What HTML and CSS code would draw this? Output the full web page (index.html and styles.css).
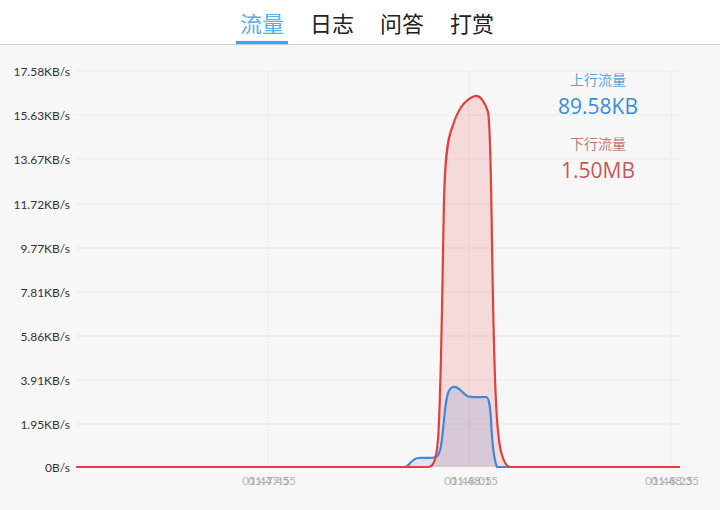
FILE: index.html
```html
<!DOCTYPE html>
<html lang="zh-CN">
<head>
    <meta charset="UTF-8">
    <meta name="viewport" content="width=device-width, initial-scale=1.0">
    <title>流量</title>
    <link rel="stylesheet" href="styles.css">
</head>
<body>
    <div class="header">
        <ul class="tabs">
            <li class="tab active">流量</li>
            <li class="tab">日志</li>
            <li class="tab">问答</li>
            <li class="tab">打赏</li>
        </ul>
    </div>
    <div class="chart">
        <svg class="plot" width="720" height="465" viewBox="0 45 720 465">
            <g class="grid">
                <line x1="76" y1="71" x2="680" y2="71"/>
                <line x1="76" y1="115" x2="680" y2="115"/>
                <line x1="76" y1="159" x2="680" y2="159"/>
                <line x1="76" y1="204" x2="680" y2="204"/>
                <line x1="76" y1="248" x2="680" y2="248"/>
                <line x1="76" y1="292" x2="680" y2="292"/>
                <line x1="76" y1="336" x2="680" y2="336"/>
                <line x1="76" y1="380" x2="680" y2="380"/>
                <line x1="76" y1="424" x2="680" y2="424"/>
                <line x1="268" y1="71" x2="268" y2="467"/>
                <line x1="469" y1="71" x2="469" y2="467"/>
                <line x1="671" y1="71" x2="671" y2="467"/>
            </g>
            <g class="ylabels">
                <text x="70" y="76">17.58KB/s</text>
                <text x="70" y="120">15.63KB/s</text>
                <text x="70" y="164">13.67KB/s</text>
                <text x="70" y="209">11.72KB/s</text>
                <text x="70" y="253">9.77KB/s</text>
                <text x="70" y="297">7.81KB/s</text>
                <text x="70" y="341">5.86KB/s</text>
                <text x="70" y="385">3.91KB/s</text>
                <text x="70" y="429">1.95KB/s</text>
                <text x="70" y="472">0B/s</text>
            </g>
            <!-- 下行 -->
            <path class="area down" d="M76,467 L428,467 C433,467 436,462 438,440 C441,400 442,300 444,200 C445,160 447,140 452,128 C457,112 463,100 475,96 C480,95 484,100 488,112 C491,125 491,200 493,300 C495,400 497,440 502,455 C504,462 506,467 510,467 L680,467 Z"/>
            <!-- 上行 -->
            <path class="area up" d="M76,467 L405,467 C409,467 411,459 418,458 C424,457 430,459 436,457 C441,455 442,440 444,420 C446,398 448,388 453,387 C459,386 462,393 467,396 C472,398 480,397 486,397 C489,397 490,405 491,420 C492,440 494,460 497,467 L680,467 Z"/>
            <path class="line up" d="M76,467 L405,467 C409,467 411,459 418,458 C424,457 430,459 436,457 C441,455 442,440 444,420 C446,398 448,388 453,387 C459,386 462,393 467,396 C472,398 480,397 486,397 C489,397 490,405 491,420 C492,440 494,460 497,467 L680,467"/>
            <path class="line down" d="M76,467 L428,467 C433,467 436,462 438,440 C441,400 442,300 444,200 C445,160 447,140 452,128 C457,112 463,100 475,96 C480,95 484,100 488,112 C491,125 491,200 493,300 C495,400 497,440 502,455 C504,462 506,467 510,467 L680,467"/>
            <g class="xlabels">
                <text x="266" y="485">01:47:45</text>
                <text x="272" y="485">01:47:55</text>
                <text x="468" y="485">01:48:05</text>
                <text x="474" y="485">01:48:15</text>
                <text x="669" y="485">01:48:25</text>
                <text x="675" y="485">01:48:35</text>
            </g>
        </svg>
        <div class="stats">
            <div class="stat-label up">上行流量</div>
            <div class="stat-value up">89.58KB</div>
            <div class="stat-label down">下行流量</div>
            <div class="stat-value down">1.50MB</div>
        </div>
    </div>
</body>
</html>
```

FILE: styles.css
```css
body {
    margin: 0;
    font-family: "Open Sans", "Noto Sans CJK SC", sans-serif;
    background-color: #f7f7f7;
    color: #333;
}
.header {
    background-color: #fff;
    height: 44px;
    border-bottom: 1px solid #cfcfcf;
}
.tabs {
    list-style: none;
    margin: 0;
    padding: 0 0 0 14px;
    display: flex;
    justify-content: center;
    gap: 18px;
    height: 44px;
}
.tab {
    font-family: "Noto Sans CJK SC", sans-serif;
    font-size: 22px;
    line-height: 44px;
    padding: 0 4px;
    color: #222;
    box-sizing: border-box;
    height: 44px;
}
.tab.active {
    color: #5aaee3;
    border-bottom: 3px solid #4a9fe0;
}
.chart {
    position: relative;
    height: 465px;
}
.plot {
    display: block;
}
.grid line {
    stroke: #ebebeb;
    stroke-width: 1;
}
.ylabels text {
    font-family: Lato, sans-serif;
    font-size: 12px;
    fill: #333;
    text-anchor: end;
}
.xlabels text {
    font-family: Lato, sans-serif;
    font-size: 12px;
    fill: #888;
    fill-opacity: 0.6;
    text-anchor: middle;
}
.area.down {
    fill: rgba(229, 57, 53, 0.15);
}
.area.up {
    fill: rgba(60, 110, 200, 0.15);
}
.line {
    fill: none;
    stroke-width: 2.2;
}
.line.down {
    stroke: #e0413b;
}
.line.up {
    stroke: #3f88d8;
}
.stats {
    position: absolute;
    top: 24px;
    left: 538px;
    width: 120px;
    text-align: center;
}
.stat-label {
    font-family: "Noto Sans CJK SC", sans-serif;
    font-size: 14px;
    line-height: 20px;
}
.stat-value {
    font-size: 21px;
    line-height: 34px;
    margin-bottom: 10px;
}
.stat-label.up {
    color: #62a3dc;
}
.stat-value.up {
    color: #3a8ddb;
}
.stat-label.down {
    color: #c47a78;
}
.stat-value.down {
    color: #c25a5b;
}
```
